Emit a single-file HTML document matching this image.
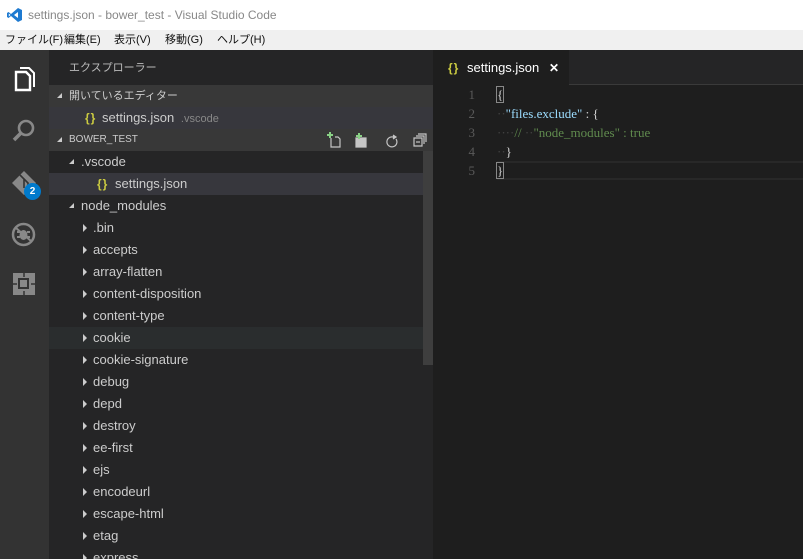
<!DOCTYPE html>
<html><head><meta charset="utf-8"><style>
*{margin:0;padding:0;box-sizing:border-box}
html,body{width:803px;height:559px;overflow:hidden}
body{position:relative;background:#1e1e1e;font-family:"Liberation Sans","Noto Sans CJK JP",sans-serif;}
.abs{position:absolute}
#title{left:0;top:0;width:803px;height:30px;background:#fff;color:#888;font-size:12px;line-height:30px;padding-left:28px}
#menu{left:0;top:30px;width:803px;height:20px;background:#f0f0f0;color:#111;font-size:11px;line-height:20px}
#menu span{position:absolute;top:0;white-space:nowrap}
#act{left:0;top:50px;width:49px;height:509px;background:#333}
#side{left:49px;top:50px;width:384px;height:509px;background:#252526;color:#ccc;font-size:13px;overflow:hidden}
.row{position:absolute;left:0;width:384px;height:22px;line-height:22px;white-space:nowrap}
.exp{position:absolute;top:8px;width:0;height:0;border-left:5px solid transparent;border-bottom:5px solid #ccc}
.col{position:absolute;top:7px;width:0;height:0;border-top:4px solid transparent;border-bottom:4px solid transparent;border-left:4px solid #ccc}
.br{color:#cbcb41;font-weight:bold;font-size:12px;letter-spacing:1px}
#ed{left:433px;top:50px;width:370px;height:509px;background:#1e1e1e}
.code{position:absolute;font-family:"Liberation Serif",serif;font-size:13px;height:19px;line-height:19px;white-space:pre}
.ln{position:absolute;left:30px;width:12px;text-align:right;color:#5a5a5a;font-family:"Liberation Serif",serif;font-size:13px;line-height:19px}
</style></head><body>
<div id="title" class="abs">settings.json - bower_test - Visual Studio Code</div>
<svg class="abs" style="left:7px;top:8px" width="15" height="14" viewBox="0 0 15 14"><path d="M11 0 L15 2 V12 L11 14 L4 8 L1.5 10 L0 9 V5 L1.5 4 L4 6 Z M11 4 L7 7 L11 10 Z M1.8 5.5 V8.5 L3.5 7 Z" fill="#1e7ad1" fill-rule="evenodd"/></svg>
<div id="menu" class="abs"><span style="left:5px">ファイル(F)</span><span style="left:64px">編集(E)</span><span style="left:114px">表示(V)</span><span style="left:165px">移動(G)</span><span style="left:217px">ヘルプ(H)</span></div>
<div id="act" class="abs">
<svg class="abs" style="left:14px;top:16px" width="22" height="26" viewBox="0 0 22 26"><path d="M6 2h9l5 5v14" fill="none" stroke="#fff" stroke-width="2"/><path d="M2 6h10l4 4v14H2z" fill="none" stroke="#fff" stroke-width="2.4"/></svg>
<svg class="abs" style="left:11px;top:68px" width="26" height="26" viewBox="0 0 26 26"><circle cx="15" cy="10" r="7" fill="none" stroke="#888" stroke-width="2.6"/><path d="M10 15 L3 22" stroke="#888" stroke-width="3.5"/></svg>
<svg class="abs" style="left:11px;top:120px" width="26" height="26" viewBox="0 0 26 26"><path d="M13 1 L25 13 L13 25 L1 13 Z" fill="#888"/><path d="M9 5 L13 9 V18 M13 9 L17 13 V18" stroke="#333" stroke-width="1.6" fill="none"/></svg>
<div class="abs" style="left:24px;top:133px;width:17px;height:17px;border-radius:50%;background:#007acc;color:#fff;font-size:10px;font-weight:bold;text-align:center;line-height:17px">2</div>
<svg class="abs" style="left:11px;top:172px" width="25" height="25" viewBox="0 0 25 25"><circle cx="12.5" cy="12.5" r="10.5" fill="none" stroke="#888" stroke-width="2.5"/><ellipse cx="12.5" cy="13" rx="4" ry="5" fill="#888"/><path d="M5 6 L20 19 M6 10h3M16 10h3M6 15h3M16 15h3" stroke="#888" stroke-width="2"/></svg>
<svg class="abs" style="left:12px;top:222px" width="24" height="24" viewBox="0 0 24 24"><path d="M1 1h22v22H1z" fill="#888"/><path d="M6 6h11v11H6z" fill="#333"/><path d="M8 8h7v7H8z" fill="#888"/><path d="M12 1v4M19 12h4M1 12h4M12 19v4" stroke="#333" stroke-width="1.5"/></svg>
</div>
<div id="side" class="abs">
<div class="abs" style="left:20px;top:0;height:35px;line-height:36px;font-size:11px;color:#bbb">エクスプローラー</div>
<div class="row" style="top:35px;background:#383838;font-size:11px"><span class="exp" style="left:8px"></span><span style="position:absolute;left:20px">開いているエディター</span></div>
<div class="row" style="top:57px;background:#37373d"><span class="br" style="position:absolute;left:36px">{}</span><span style="position:absolute;left:53px">settings.json <span style="color:#888;font-size:11px">&nbsp;.vscode</span></span></div>
<div class="row" style="top:79px;background:#383838;font-size:10px"><span class="exp" style="left:8px"></span><span style="position:absolute;left:20px">BOWER_TEST</span>
<svg class="abs" style="left:278px;top:3px" width="100" height="16" viewBox="0 0 100 16"><g fill="none" stroke="#c5c5c5" stroke-width="1.2"><path d="M4 6v9h9V7l-2-2H8"/><path d="M3 0v6M0 3h6" stroke="#89d185" stroke-width="2"/><path d="M29 6h10v9H29z" fill="#c5c5c5"/><path d="M32 1v6M29 4h6" stroke="#89d185" stroke-width="2"/><path d="M66 5a5 5 0 1 0 3 2"/><path d="M66 3l3 2-3 2" fill="#c5c5c5"/><path d="M87 6h8v8h-8z"/><path d="M89 4h8v8M91 2h8v8"/><path d="M89 10h4"/></g></svg></div>
<div class="abs" style="left:374px;top:101px;width:10px;height:214px;background:#3e3e3e"></div>
<div class="row" style="top:101px"><span class="exp" style="left:20px"></span><span style="position:absolute;left:32px">.vscode</span></div>
<div class="row" style="top:123px;background:#37373d;width:374px"><span class="br" style="position:absolute;left:48px">{}</span><span style="position:absolute;left:66px">settings.json</span></div>
<div class="row" style="top:145px"><span class="exp" style="left:20px"></span><span style="position:absolute;left:32px">node_modules</span></div>
<div class="row" style="top:167px"><span class="col" style="left:34px"></span><span style="position:absolute;left:44px">.bin</span></div>
<div class="row" style="top:189px"><span class="col" style="left:34px"></span><span style="position:absolute;left:44px">accepts</span></div>
<div class="row" style="top:211px"><span class="col" style="left:34px"></span><span style="position:absolute;left:44px">array-flatten</span></div>
<div class="row" style="top:233px"><span class="col" style="left:34px"></span><span style="position:absolute;left:44px">content-disposition</span></div>
<div class="row" style="top:255px"><span class="col" style="left:34px"></span><span style="position:absolute;left:44px">content-type</span></div>
<div class="row" style="top:277px;background:#2a2d2e;width:374px"><span class="col" style="left:34px"></span><span style="position:absolute;left:44px">cookie</span></div>
<div class="row" style="top:299px"><span class="col" style="left:34px"></span><span style="position:absolute;left:44px">cookie-signature</span></div>
<div class="row" style="top:321px"><span class="col" style="left:34px"></span><span style="position:absolute;left:44px">debug</span></div>
<div class="row" style="top:343px"><span class="col" style="left:34px"></span><span style="position:absolute;left:44px">depd</span></div>
<div class="row" style="top:365px"><span class="col" style="left:34px"></span><span style="position:absolute;left:44px">destroy</span></div>
<div class="row" style="top:387px"><span class="col" style="left:34px"></span><span style="position:absolute;left:44px">ee-first</span></div>
<div class="row" style="top:409px"><span class="col" style="left:34px"></span><span style="position:absolute;left:44px">ejs</span></div>
<div class="row" style="top:431px"><span class="col" style="left:34px"></span><span style="position:absolute;left:44px">encodeurl</span></div>
<div class="row" style="top:453px"><span class="col" style="left:34px"></span><span style="position:absolute;left:44px">escape-html</span></div>
<div class="row" style="top:475px"><span class="col" style="left:34px"></span><span style="position:absolute;left:44px">etag</span></div>
<div class="row" style="top:497px"><span class="col" style="left:34px"></span><span style="position:absolute;left:44px">express</span></div>
</div>
<div id="ed" class="abs">
<div class="abs" style="left:0;top:0;width:370px;height:35px;background:#252526"></div>
<div class="abs" style="left:136px;top:34px;width:234px;height:1px;background:#3a3a3a"></div>
<div class="abs" style="left:0;top:0;width:136px;height:35px;background:#1e1e1e;color:#fff;font-size:13px;line-height:36px"><span class="br" style="position:absolute;left:15px">{}</span><span style="position:absolute;left:34px">settings.json</span><span style="position:absolute;left:116px;font-size:12px;font-weight:bold">✕</span></div>
<div class="ln" style="top:35px">1</div><div class="ln" style="top:54px">2</div><div class="ln" style="top:73px">3</div><div class="ln" style="top:92px">4</div><div class="ln" style="top:111px">5</div>
<div class="abs" style="left:64px;top:111px;width:306px;height:19px;border-top:2px solid #282828;border-bottom:2px solid #282828"></div>
<div class="code" style="left:64px;top:35px;color:#d4d4d4"><span style="outline:1px solid #888">{</span></div>
<div class="code" style="left:64px;top:54px;color:#d4d4d4"><span style="color:#444">··</span><span style="color:#9cdcfe">"files.exclude"</span> : {</div>
<div class="code" style="left:64px;top:73px;color:#608b4e"><span style="color:#444">····</span>// <span style="color:#444">··</span>"node_modules" : true</div>
<div class="code" style="left:64px;top:92px;color:#d4d4d4"><span style="color:#444">··</span>}</div>
<div class="code" style="left:64px;top:111px;color:#d4d4d4"><span style="outline:1px solid #888">}</span></div>
</div>
</body></html>
